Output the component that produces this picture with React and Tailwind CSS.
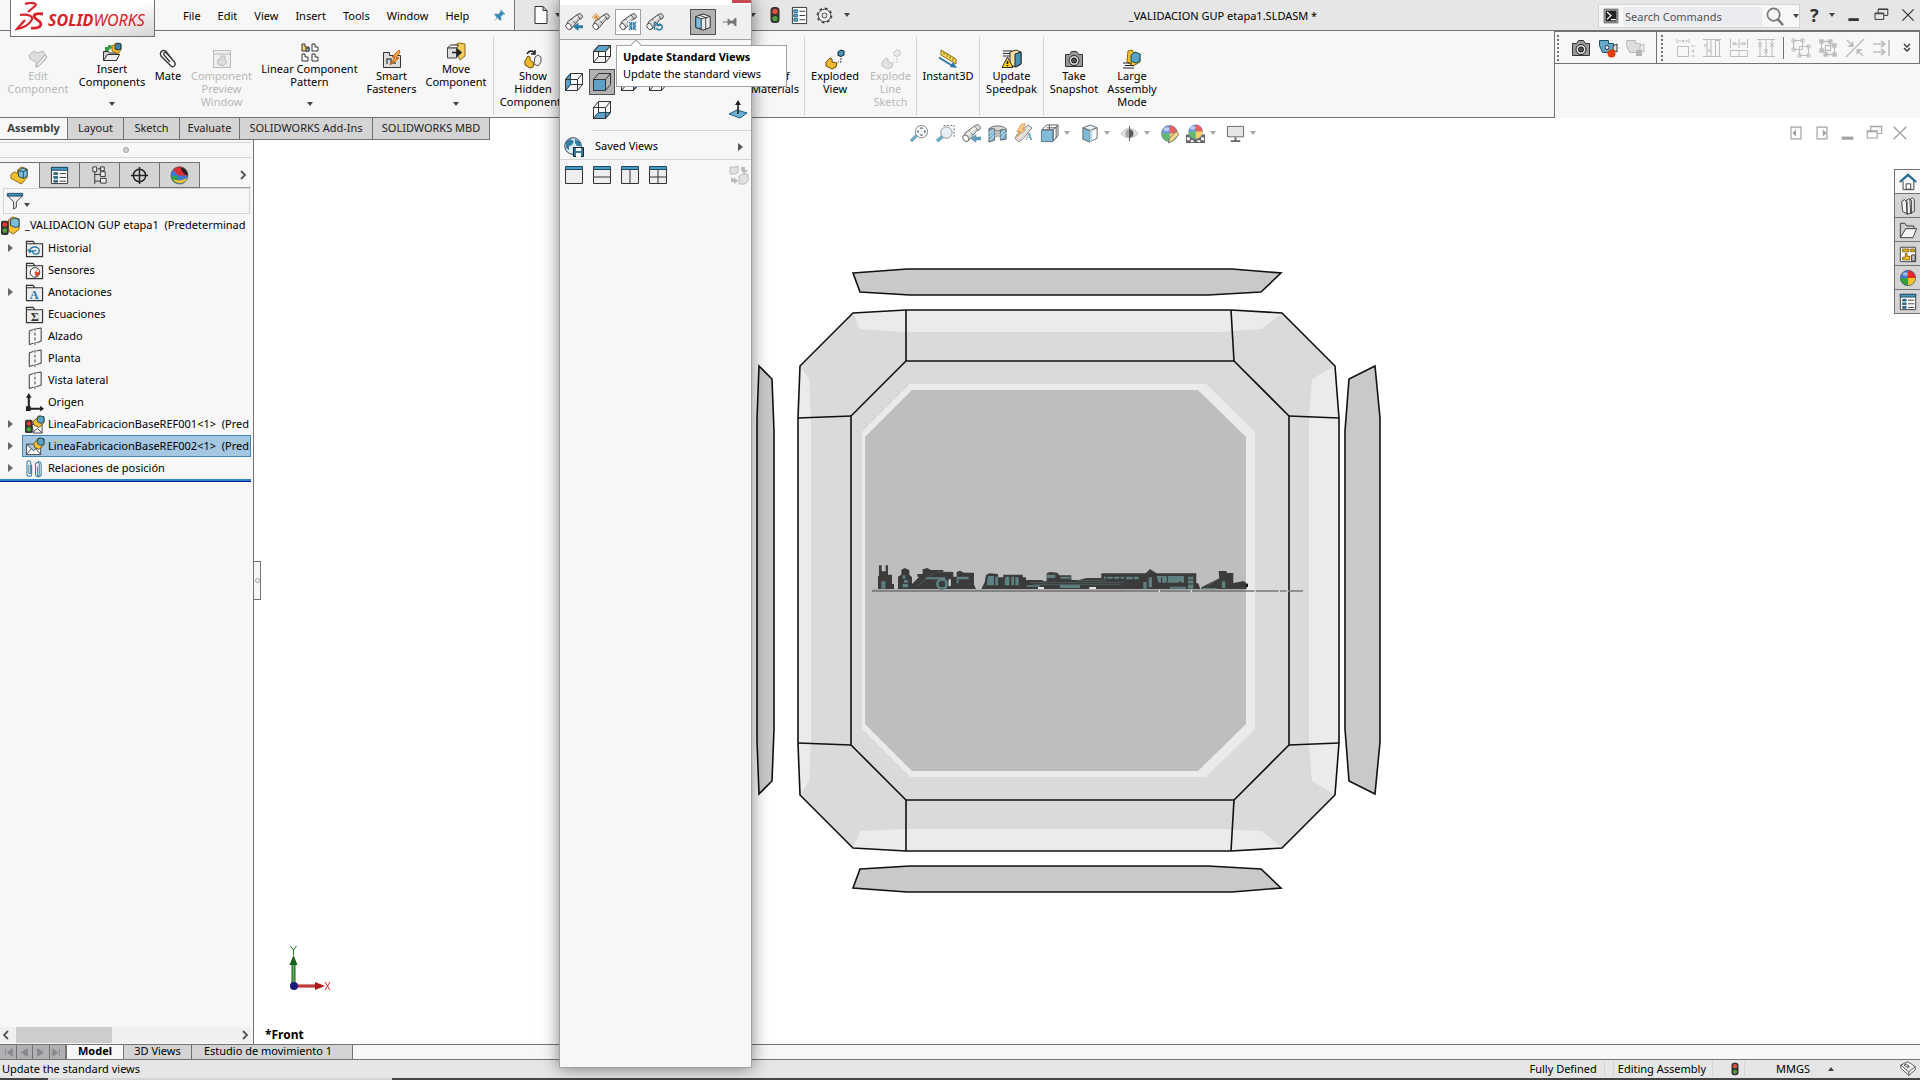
import { useState } from "react";

// All small drawings share a 20x20 box
const drawings = {
    newDoc: <path d="M4 1.5h8l4 4v13H4zM12 1.5v4h4" fill="#fff" stroke="#333" />,
    traffic: (
        <>
            <rect x="5" y="1" width="10" height="18" rx="4" fill="#333" />
            <circle cx="10" cy="6" r="3" fill="#e8513a" />
            <circle cx="10" cy="14" r="3" fill="#4da23a" />
        </>
    ),
    list: (
        <>
            <path d="M2.5 1.5h15v17h-15z" fill="#fff" stroke="#333" />
            <path d="M4 4h4v3H4zM4 8.5h4v3H4zM4 13h4v3H4z" fill="#5fa3c4" stroke="#1d5a7a" strokeWidth=".8" />
            <path d="M10 5.5h6M10 10h6M10 14.5h6" stroke="#333" />
        </>
    ),
    gear: (
        <>
            <circle cx="10" cy="10" r="6.5" fill="#f2f2f2" stroke="#444" />
            <circle cx="10" cy="10" r="7.5" fill="none" stroke="#444" strokeWidth="1.6" strokeDasharray="3 2.9" />
            <circle cx="10" cy="10" r="2.6" fill="#e6e6e6" stroke="#444" />
        </>
    ),
    pinBlue: <path d="M12 1l7 7-2 1-1-1-4 4 1 4-2 2-4-4-6 5 5-6-4-4 2-2 4 1 4-4-1-1z" fill="#3b8cb5" />,
    pinGray: <path d="M1 9.500h7v1H1zM7 6h1.500l1.500 2h4l2-3h2v10h-2l-2-3h-4l-1.500 2H7z" fill="#777" />,
    terminal: (
        <>
            <path d="M1.500 1.500h17v17h-17z" fill="#fff" stroke="#222" />
            <path d="M3 3h14v14H3z" fill="#222" />
            <path d="M5 5l5 4.500L5 14M10 14.500h6" fill="none" stroke="#fff" strokeWidth="1.500" />
        </>
    ),
    search: (
        <>
            <circle cx="8" cy="8" r="6.500" fill="none" stroke="#777" strokeWidth="1.800" />
            <path d="M12.500 13l5.500 6" stroke="#777" strokeWidth="2.600" />
        </>
    ),
    minimize: <path d="M3 14h13v3.500H3z" fill="#333" />,
    restore: <path d="M6.500 7.500v-5h12v8h-5M2.500 7.500h11v8h-11zM2.500 8.500h11M6.500 3h12" fill="none" stroke="#333" strokeWidth="1.200" />,
    close: <path d="M3 3l14 14M17 3L3 17" stroke="#333" strokeWidth="1.500" />,
    paneLeft: (
        <>
            <path d="M4.500 3.500h11v13h-11z" fill="none" stroke="#333" strokeWidth="1.300" />
            <path d="M10 6v8l-4-4z" fill="#333" />
        </>
    ),
    paneRight: (
        <>
            <path d="M4.500 3.500h11v13h-11z" fill="none" stroke="#333" strokeWidth="1.300" />
            <path d="M11 6v8l4-4z" fill="#333" />
        </>
    ),
    editPart: (
        <>
            <path d="M1 6l5-4 4 2 5-2 2 3v6l-6 6-3 1v-5l-6-3z" fill="#ddd" stroke="#bbb" />
            <path d="M17 6l2 2-8 9-3 1 1-3z" fill="#eee" stroke="#aaa" />
        </>
    ),
    insertPart: (
        <>
            <path d="M1.500 18.500v-9h5l1 1.500h7v7.500z" fill="#ccc" stroke="#333" />
            <path d="M1.500 18.500l4-6h12l-3 6z" fill="#eee" stroke="#333" />
            <path d="M3 9V5h3V3l4 .500-1 4-1-1-2 2.500z" fill="#2c9c3b" />
            <path d="M10 4l4-3 5 1v6l-3 4-6-3z" fill="#f0b92b" stroke="#7a5a10" strokeWidth=".8" />
            <path d="M13 3l3-2 3 1v5l-3 1-3-1z" fill="#3c83a8" stroke="#123" strokeWidth=".8" />
        </>
    ),
    clip: (
        <path d="M12 13L6 6c-1-2 1-3.500 2.500-2l8 9c2 3-1 6-3.500 4L3 7C1 3 5 0 8 2.500l6 7.500" fill="none" stroke="#333" strokeWidth="1.300" />
    ),
    previewWin: (
        <>
            <path d="M1.500 1.500h17v17h-17zM1.500 5h17" fill="#eee" stroke="#bbb" />
            <path d="M6 11l3-1V7h4v4l2 2-4 4-5-2z" fill="#ddd" stroke="#bbb" />
        </>
    ),
    pattern: (
        <>
            <path d="M2 2h3v3h4v4H2z" fill="#f6d873" stroke="#333" />
            <path d="M6 6h3v3H6z" fill="#9cd" stroke="#333" />
            <path d="M12 2h3v3h3v4h-6zM2 12h3v3h3v4H2zM12 12h3v3h3v4h-6z" fill="#fff" stroke="#333" />
        </>
    ),
    fasteners: (
        <>
            <path d="M1.500 3.500h6v3h11v12h-17z" fill="#ddd" stroke="#333" />
            <path d="M5 15v-5h4v4h5" fill="none" stroke="#555" strokeWidth="1.500" />
            <path d="M17 1l-7 7h3l-5 8 9-7h-3l4-6z" fill="#f3b13a" stroke="#c4531b" />
        </>
    ),
    movePart: (
        <>
            <path d="M7 4l6-3 6 1v12l-5 4z" fill="#f4cd57" stroke="#8a6a15" />
            <path d="M1.500 6l3-3h8l-2 3z" fill="#fff" stroke="#333" />
            <path d="M1.500 6h9v10h-9z" fill="#ddd" stroke="#444" />
            <path d="M6 10.500h7M11.500 7.500l3.500 3-3.500 3z" stroke="#222" strokeWidth="1.500" fill="#222" />
        </>
    ),
    showHidden: (
        <>
            <path d="M2 12l3-5 2 1v3l4 3-1 4-3 1-5-3z" fill="#f0b92b" stroke="#6b4c08" />
            <path d="M12 8l3-2 3 2v5l-3 4-4-2z" fill="#eee" stroke="#555" />
            <path d="M4 5c2-4 6-4 8 0M12 1v4H8" fill="none" stroke="#222" strokeWidth="1.500" />
        </>
    ),
    bom: <path d="M2.500 2.500h15v15h-15zM2.500 7h15M8 2.500v15" fill="#fff" stroke="#333" />,
    exploded: (
        <>
            <path d="M1 13l4-4 2 1v3l5 1-1 4-4 2-6-3z" fill="#f0b92b" stroke="#6b4c08" />
            <path d="M13 3l3-2 3 1v4l-3 1.500-3-1z" fill="#4a93b8" stroke="#123" />
            <path d="M16 9v4h-3" fill="none" stroke="#333" strokeDasharray="2 1" />
        </>
    ),
    explodeLine: (
        <>
            <path d="M1 13l4-4 2 1v3l5 1-1 4-4 2-6-3z" fill="#e2e2e2" stroke="#c4c4c4" />
            <path d="M13 3l3-2 3 1v4l-3 1.500-3-1z" fill="#eee" stroke="#c4c4c4" />
            <path d="M16 9v4h-3" fill="none" stroke="#c4c4c4" strokeDasharray="2 1" />
        </>
    ),
    instant: (
        <>
            <path d="M3 1l15 9v5L3 6z" fill="#f9dc62" stroke="#8a6d10" />
            <path d="M6 3v3M9 5v3M12 7v3M15 9v3" stroke="#8a6d10" />
            <path d="M1 8.500l13 8" stroke="#2d77a0" strokeWidth="2" />
            <path d="M12 18l7 1-4-6z" fill="#2d77a0" />
        </>
    ),
    speedpak: (
        <>
            <path d="M1 2h9M1 4.500h7M1 7h7" stroke="#333" />
            <path d="M8 3l6-2 5 2v12l-5 3-6-2z" fill="#f3e0a0" stroke="#333" />
            <path d="M13 5l6-2v12l-6 3z" fill="#4a93b8" stroke="#222" />
            <path d="M5.500 8l5.500 10.500H0z" fill="#ffcf1f" stroke="#333" />
            <path d="M5.500 12v3M5.500 16v1.300" stroke="#111" strokeWidth="1.600" />
        </>
    ),
    camera: (
        <>
            <path d="M1.500 5.500h4l2-3h5l2 3h4v12h-17z" fill="#999" stroke="#333" />
            <circle cx="10" cy="11.500" r="5" fill="#ddd" stroke="#222" />
            <circle cx="10" cy="11.500" r="2.500" fill="#555" stroke="#111" />
        </>
    ),
    largeAsm: (
        <>
            <path d="M6 2l4-1 2 3 6 1v8l-7 4-6-4z" fill="#f4c033" stroke="#8a6510" />
            <path d="M9 6l4-3 5 2v7l-4 2-5-2z" fill="#5ba2c6" stroke="#155" />
            <path d="M1 14h9M3 16.500h9M1 19h11" stroke="#222" />
        </>
    ),
    record: (
        <>
            <path d="M1.500 2.500h9v3h5v9h-11l-3-7z" fill="#67abc9" stroke="#1c4d66" />
            <path d="M15 8l4-2v8l-4-2z" fill="#ddd" stroke="#333" />
            <circle cx="9" cy="9.500" r="2" fill="#eee" stroke="#234" />
            <circle cx="13.500" cy="15.500" r="4" fill="#e63d0c" />
        </>
    ),
    recordOff: (
        <>
            <path d="M1.500 2.500h9v3h5v9h-11l-3-7z" fill="#ddd" stroke="#bbb" />
            <path d="M15 8l4-2v8l-4-2z" fill="#eee" stroke="#bbb" />
            <path d="M11 12h6v6h-6z" fill="#b5b5b5" />
        </>
    ),
    layA: <path d="M2.500 8.500h11v10h-11zM2 1v4M14 1v4M3 3h3M10 3h3M7 2l2 2M9 2L7 4M16 8h4M16 18h4M17 12l2 2M19 12l-2 2" fill="none" stroke="#bdbdbd" />,
    layB: <path d="M1 1.500h18M1 18.500h18M5 2v16M9 2v16M13.500 2.500h4v16h-4zM2 6l3 3M5 6L2 9M6 11l3 3M9 11l-3 3" fill="none" stroke="#bdbdbd" />,
    layC: <path d="M1.500 1v9M10 1v9M18.500 1v9M3 6h6M11 6h6M4 4l3 3M7 4L4 7M13 4l3 3M16 4l-3 3M1.500 12.500h17v6h-17zM10 12.500v6" fill="none" stroke="#bdbdbd" />,
    layD: <path d="M1 1.500h18M1 18.500h18M4 2v16M10 2v16M16 2v16M2 5l4 4M6 5L2 9M8 11l4 4M12 11l-4 4M14 5l4 4M18 5l-4 4" fill="none" stroke="#bdbdbd" />,
    groupA: <path d="M2.500 2.500h9v9h-9zM8.500 8.500h9v9h-9zM1 1h3v3H1zM10 1h3v3h-3zM1 10h3v3H1zM16 7h3v3h-3zM7 16h3v3H7zM16 16h3v3h-3z" fill="none" stroke="#bdbdbd" />,
    groupB: <path d="M3.500 3.500h9v9h-9zM7.500 7.500h9v9h-9zM2 2h3v3H2zM11 2h3v3h-3zM2 11h3v3H2zM15 6h3v3h-3zM6 15h3v3H6zM15 15h3v3h-3z" fill="none" stroke="#bdbdbd" strokeWidth="1.300" />,
    collapse: (
        <>
            <path d="M1 19L19 1M2 2l6 6M18 18l-6-6" stroke="#bdbdbd" strokeWidth="1.300" />
            <path d="M8.500 3v6h-6zM11.500 17v-6h6z" fill="#bdbdbd" />
        </>
    ),
    alignRight: <path d="M1 6h11M9 3l4 3-4 3M1 14h11M9 11l4 3-4 3M17 2v16" fill="none" stroke="#bdbdbd" strokeWidth="1.600" />,
    scope: (
        <>
            <path d="M14 1.500l3-1 2.500 3-1 2.500-3 1-7 9-3 2.500-4-4 1.500-5 4-3z" fill="#cfcfcf" stroke="#444" />
            <path d="M13 2l4 5M7 6.500l4.500 5" stroke="#444" />
            <path d="M14 4L6 11" stroke="#fff" strokeWidth="1.500" />
            <ellipse cx="4" cy="15" rx="2.800" ry="3.600" transform="rotate(-35 4 15)" fill="#fff" stroke="#444" />
        </>
    ),
    badgePrev: <path d="M20 13.500v3.500h-5v3l-6-4.800 6-4.700v3z" fill="#2b7ba6" />,
    badgeNew: <path d="M4.500 0v9M0 4.500h9M1.500 1.500l6 6M7.500 1.500l-6 6" stroke="#d9862a" />,
    badgeUpdate: (
        <>
            <path d="M10 9h10v11H10z" fill="#f7f7f7" />
            <path d="M11 10l3 3M14 10v3.500h-3M19 10l-3 3M16 10v3.500h3M11 19l3-3M11 15.500h3V19M19 19l-3-3M19 15.500h-3V19" fill="none" stroke="#2b7ba6" strokeWidth="1.300" />
        </>
    ),
    badgeReset: <path d="M9.500 10v9M13 13.500c3-2 6 0 5 3s-6 3-6 0M12.500 10.500v3.500H16" fill="none" stroke="#2b7ba6" strokeWidth="1.700" />,
    viewBox: (
        <>
            <path d="M2 4l8-3 8 3v12l-8 3-8-3z" fill="#ececec" stroke="#222" />
            <path d="M2 4l6 2.500V18l-6-2z" fill="#7cc0e2" stroke="#222" />
            <path d="M8 6.500L18 4M13 5.500V18M6 2.500l8 3" fill="none" stroke="#333" />
        </>
    ),
    normalTo: (
        <>
            <path d="M1 14l8-4 10 3-7 5z" fill="#6db1d3" stroke="#1d5a7a" />
            <path d="M10 14V3" stroke="#222" strokeWidth="1.600" />
            <path d="M10 0l3 5H7z" fill="#222" />
        </>
    ),
    savedViews: (
        <>
            <circle cx="9" cy="9" r="8.300" fill="#d8ecf5" stroke="#345" />
            <path d="M2 5l4-3 4 2-2 4-3 1v4l-3-2zM11 2l5 3 1 4h-4l-2-3z" fill="#2f7da5" />
            <path d="M9.500 10.500h10v9h-10z" fill="#2f7da5" stroke="#123" />
            <path d="M12 11h5v3h-5zM12 16h5v4h-5z" fill="#fff" />
        </>
    ),
    swap: (
        <>
            <path d="M1 2h6l2-1v6l-2 2H1zM10 11l4-2h5v7l-3 3h-6z" fill="#e2e2e2" stroke="#bbb" />
            <path d="M12 2h4v3h3l-4 4-3-4zM2 12v5h3v2l4-3-4-4v2z" fill="#bbb" />
        </>
    ),
    zoomFit: (
        <>
            <path d="M1 18l6-6" stroke="#3d8db5" strokeWidth="3.500" />
            <circle cx="12" cy="8" r="6.500" fill="#f4f9fc" stroke="#555" />
            <path d="M12 3l2 2h-4zM12 13l2-2h-4zM7 8l2-2v4zM17 8l-2-2v4z" fill="#333" />
        </>
    ),
    zoomArea: (
        <>
            <path d="M8 1.500h11v12" fill="none" stroke="#333" strokeDasharray="2 1.500" />
            <path d="M1 18l6-5" stroke="#3d8db5" strokeWidth="3.500" />
            <circle cx="11" cy="9" r="6" fill="#dcebf2" stroke="#666" />
        </>
    ),
    section: (
        <>
            <path d="M1 5c4-4 14-4 18 0v3h-6V7H7v3z" fill="#ccc" stroke="#333" />
            <path d="M7 7h6v7H7z" fill="#aaa" />
            <path d="M1 5h6v12l-6 2zM13 6h6v10l-6 1z" fill="#4a9ac2" stroke="#333" />
            <path d="M1 10l5-4M1 14l6-6M2 17l5-5M13 11l5-5M13 15l6-6" stroke="#d5ecf7" />
        </>
    ),
    dynamic: (
        <>
            <path d="M15 1l4 3-9 11-5 4-4-4 3-5z" fill="#d5d5d5" stroke="#555" />
            <path d="M8 0L3 8h4l-5 6 10-8H9l3-6z" fill="#f6bb56" stroke="#d57a1f" />
            <text x="12" y="17" fontSize="10" fontWeight="bold" fontFamily="Liberation Serif, serif" fill="#2b7ba6">A</text>
        </>
    ),
    orient: (
        <>
            <path d="M7 1h12v11l-5 6V6H2z" fill="#fff" stroke="#222" />
            <path d="M10 1v5M7 4h10M14 6l5-5M17 3v12" stroke="#222" />
            <path d="M1.500 6.500h12v12h-12z" fill="#5ba6cb" stroke="#1d4b63" />
        </>
    ),
    shaded: (
        <>
            <path d="M3 4l8-3 7 3-7 3z" fill="#d9edf7" stroke="#333" />
            <path d="M3 4l7 3v12l-7-3z" fill="#52a3cb" stroke="#333" />
            <path d="M10 7l8-3v11l-8 4z" fill="#fff" stroke="#333" />
            <path d="M10 7l3-1v12l-3 1z" fill="#9bcbe2" />
        </>
    ),
    eye: (
        <>
            <path d="M1 10c5-7 13-7 18 0-5 6-13 6-18 0z" fill="#ddd" stroke="#aaa" />
            <circle cx="10" cy="10" r="4.500" fill="#888" />
            <path d="M10 2v16" stroke="#222" />
            <path d="M10 6a4 4 0 010 8z" fill="#222" />
        </>
    ),
    ball: (
        <>
            <circle cx="10" cy="10" r="8.500" fill="#3f78d8" />
            <path d="M10 10V1.500A8.500 8.500 0 0118.500 10z" fill="#e02c2c" />
            <path d="M10 10h8.500a8.500 8.500 0 01-8.500 8.500z" fill="#f1c232" />
            <path d="M10 10v8.500A8.500 8.500 0 011.500 10z" fill="#2ea33c" />
            <circle cx="10" cy="10" r="8.500" fill="none" stroke="#555" strokeWidth=".7" />
            <ellipse cx="7" cy="5.500" rx="3" ry="2" fill="#fff" opacity=".5" />
        </>
    ),
    badgePencil: <path d="M17 8l3 3-7 7-4 2 1-5z" fill="#f5cf5a" stroke="#444" />,
    ballFloor: (
        <>
            <path d="M0 11h20v9H0z" fill="#333" />
            <path d="M1 14h3v3H1zM5 17h3v2H5zM12 17h3v2h-3zM16 14h3v3h-3z" fill="#fff" />
            <circle cx="10" cy="8" r="7.500" fill="#3f78d8" />
            <path d="M10 8V.500A7.500 7.500 0 0117.500 8z" fill="#e02c2c" />
            <path d="M10 8h7.500a7.500 7.500 0 01-7.500 7.500z" fill="#f1c232" />
            <path d="M10 8v7.500A7.500 7.500 0 012.500 8z" fill="#2ea33c" />
            <ellipse cx="7" cy="4" rx="3" ry="2" fill="#fff" opacity=".5" />
        </>
    ),
    ballDark: (
        <>
            <circle cx="10" cy="10" r="9" fill="#3f78d8" />
            <path d="M3 4a9 9 0 0114 0l2 6H8z" fill="#e02c2c" />
            <path d="M1 9l7 1-1 8.500A9 9 0 011 9z" fill="#2ea33c" />
            <path d="M3 14c4 2 11 1 16-2a9 9 0 01-16 2z" fill="#f1c232" />
            <path d="M3 4l6 6-8 1a9 9 0 012-7z" fill="#3f78d8" />
            <path d="M11 1a9 9 0 018 9c-4-1-7-4-8-9z" fill="#222" />
            <circle cx="10" cy="10" r="9" fill="none" stroke="#555" strokeWidth=".7" />
        </>
    ),
    monitor: (
        <>
            <path d="M1.500 2.500h17v11h-17z" fill="#ddd" stroke="#333" />
            <path d="M9 14h2v3h4v2H5v-2h4z" fill="#333" />
        </>
    ),
    home: (
        <>
            <path d="M4.500 9v9.500h12V9" fill="#f7f7f7" stroke="#333" />
            <path d="M8 12h5v6H8z" fill="#fff" stroke="#333" />
            <path d="M1 10l9-8 9 8" fill="none" stroke="#256b92" strokeWidth="2.600" />
        </>
    ),
    books: <path d="M3 5l3-2 3 2v14l-5-3zM8 4l3-2 3 2v14l-5 1zM12 3l3-2 2 2v13l-4 2z" fill="#f3f3f3" stroke="#333" />,
    folder: (
        <>
            <path d="M1.500 18.500v-16h5l2 3h8v3" fill="#ccc" stroke="#333" />
            <path d="M1.500 18.500l6-10h12l-4 10z" fill="#f4f4f4" stroke="#333" />
        </>
    ),
    viewPalette: (
        <>
            <path d="M1.500 2.500h17v16h-17z" fill="#fff" stroke="#333" />
            <path d="M4 4.500h7v3H4zM13 4.500h4v3h-4zM7 9.500h2v3h3v4H4v-3h3z" fill="#f3bf22" stroke="#6b4c08" strokeWidth=".9" />
            <path d="M14 11h4v7h-4z" fill="#bbb" stroke="#333" />
        </>
    ),
    props: (
        <>
            <path d="M1.500 1.500h17v17h-17z" fill="#fff" stroke="#333" />
            <path d="M1.500 1.500h17v3h-17z" fill="#4a9ac2" stroke="#1d4b63" />
            <path d="M4 7h4v2H4zM4 11h4v2H4zM4 15h4v2H4z" fill="#2b7ba6" stroke="#1d4b63" strokeWidth=".8" />
            <path d="M10 8h7M10 12h7M10 16h7" stroke="#333" />
        </>
    ),
    part: (
        <>
            <path d="M1 9l4-3 3 2V4l4-3 6 2v9l-6 7L1 13z" fill="#f4c033" stroke="#8a6510" />
            <path d="M9 5l4-3 5 2v7l-4 2-5-2z" fill="#7dbddb" stroke="#1d4b63" />
            <path d="M9 5l5 1v7M14 6l4-2" fill="none" stroke="#1d4b63" />
        </>
    ),
    configs: <path d="M3 1h4v5H3zM5 6v13M5 9h6M5 16h6M8 3h4M11 6h5v5h-5zM11 13h6v5h-6zM11 1h4v4h-4z" fill="#eee" stroke="#333" />,
    target: (
        <>
            <circle cx="10" cy="10" r="6.500" fill="none" stroke="#222" strokeWidth="1.600" />
            <path d="M10 1v18M1 10h18" stroke="#222" strokeWidth="1.600" />
        </>
    ),
    filter: (
        <>
            <path d="M1.500 4l7 7v8l3-2v-6l7-7z" fill="#eee" stroke="#333" />
            <path d="M1.500 1.500h17v3h-17z" fill="#3d8db5" stroke="#1d4b63" />
        </>
    ),
    rootPart: (
        <>
            <path d="M8 4l4-3 7 2v11l-6 5-5-3z" fill="#f4c033" stroke="#8a6510" />
            <path d="M10 4l4-2 5 2v7l-4 1-5-2z" fill="#7dbddb" stroke="#1d4b63" />
            <rect x="0" y="5" width="8" height="15" rx="2" fill="#333" />
            <circle cx="4" cy="9" r="2.500" fill="#e23a2c" />
            <circle cx="4" cy="15.500" r="2.500" fill="#4da23a" />
        </>
    ),
    folderBase: <path d="M1.500 18.500v-16h7l2 2.500h8v13.500zM1.500 5h9" fill="#ececec" stroke="#333" strokeWidth="1.200" />,
    history: <path d="M5 13c0-6 10-6 10-1s-7 5-7 1l4-1M3 11l2 3 3-2" fill="none" stroke="#2b7ba6" strokeWidth="1.500" />,
    sensor: (
        <>
            <circle cx="10.500" cy="12" r="5" fill="#fff" stroke="#333" />
            <path d="M10.500 12l3-3M10.500 12h4a4 4 0 01-3 4z" fill="#e0442c" stroke="#e0442c" />
        </>
    ),
    annotation: <text x="5" y="17" fontSize="13" fontWeight="bold" fontFamily="Liberation Serif, serif" fill="#2b7ba6">A</text>,
    equation: <text x="6" y="17" fontSize="13" fontWeight="bold" fontFamily="Liberation Serif, serif" fill="#333">Σ</text>,
    plane: (
        <>
            <path d="M4.500 4v14.500M4.500 18.500L9 17M4.500 4L9 2.500M12 2l5-1v14l-5 1.500" fill="none" stroke="#333" />
            <path d="M10.500 1v18" stroke="#333" strokeDasharray="3 2" />
        </>
    ),
    origin: (
        <>
            <path d="M4 3v13.500h13" fill="none" stroke="#222" strokeWidth="2.200" />
            <path d="M4 0l3 5H1zM20 16.500l-4-3v6zM1 14h5v5H1z" fill="#222" />
        </>
    ),
    compA: (
        <>
            <path d="M7 10h11v9H9z" fill="#f3f3f3" stroke="#444" />
            <path d="M8 19l5-5 5 5" fill="none" stroke="#444" />
            <path d="M8 7l4-3 2-3 6 1v6l-5 5-5-2z" fill="#f4c033" stroke="#6b4c08" />
            <path d="M13 3l3-2 4 1v5l-3 2-4-2z" fill="#5ba2c6" stroke="#1d4b63" />
            <rect x="0" y="5" width="8" height="14" rx="2" fill="#333" />
            <circle cx="4" cy="9" r="2.400" fill="#e23a2c" />
            <circle cx="4" cy="15" r="2.400" fill="#4da23a" />
        </>
    ),
    compB: (
        <>
            <path d="M1.500 7.500h15v11h-15zM1.500 7.500l7.500 7 7.500-7M1.500 18.500l5-6M16.500 18.500l-5-6" fill="#fff" stroke="#444" />
            <path d="M9 7l3-3 2-3 6 1v6l-5 5-5-2z" fill="#f4c033" stroke="#6b4c08" />
            <path d="M13 3l3-2 4 1v5l-3 2-4-2z" fill="#5ba2c6" stroke="#1d4b63" />
        </>
    ),
    mates: (
        <path d="M4 6v8c0 2 2 2 2 0V4c0-3-4-3-4 0v12c0 3 5 3 5 0V6M13 8v8c0 2 2 2 2 0V6c0-3-4-3-4 0v10c0 4 6 3 6 0V5c0-2-3-3-4-1" fill="none" stroke="#3d7f9f" strokeWidth="1.100" />
    ),
    note: <path d="M1 5l9-4 9 6v4l-8 7-10-9zM1 5l10 9 8-7M11 14v4M5 5l3-1 3 2-3 1zM9 8l3-1" fill="#fff" stroke="#333" />,
    winOne: <path d="M1.500 4.500h17v14h-17z" fill="#eee" stroke="#333" />,
    winRows: <path d="M1.500 4.500h17v14h-17zM1.500 12h17" fill="#eee" stroke="#333" />,
    winCols: <path d="M1.500 4.500h17v14h-17zM10 4.500v14" fill="#eee" stroke="#333" />,
    winFour: <path d="M1.500 4.500h17v14h-17zM10 4.500v14M1.500 12h17" fill="#eee" stroke="#333" />,
    winHead: <path d="M1.500 1.500h17v3h-17z" fill="#4a9ac2" stroke="#1d4b63" />,
};

const faces = {
    top: "M1.500 7.500l5-6h12l-5 6z",
    left: "M1.500 7.500l5-6v11l-5 6z",
    front: "M1.500 7.500h12v11h-12z",
    right: "M13.500 7.500l5-6v11l-5 6z",
    bottom: "M1.500 18.500l5-6h12l-5 6z",
    back: "",
};

function Icon({ names, size = 20 }) {
    return (
        <svg viewBox="0 0 20 20" width={size} height={size} className="shrink-0 overflow-visible" aria-hidden="true">
            {names.split(" ").map((n) => (
                <g key={n}>{drawings[n]}</g>
            ))}
        </svg>
    );
}

function Cube({ face }) {
    return (
        <svg viewBox="0 0 20 20" width="20" height="20" className="shrink-0" aria-hidden="true">
            {face !== "front" && <path d="M6.500 1.500v11h12M6.500 12.500l-5 6" fill="none" stroke="#333" />}
            <path d={faces[face]} fill="#5ba2c6" stroke="#1d4b63" />
            <path d="M1.500 7.500h12v11h-12zM1.500 7.500l5-6h12v11l-5 6M13.500 7.500l5-6" fill="none" stroke="#333" />
        </svg>
    );
}

function Caret({ className = "" }) {
    return (
        <svg viewBox="0 0 6 4" width="6" height="4" className={`shrink-0 ${className}`} aria-hidden="true">
            <path d="M0 0h6L3 4z" fill="#444" />
        </svg>
    );
}

function Logo() {
    return (
        <div className="relative z-10 ml-[10px] flex h-[37px] w-[145px] items-center border border-t-0 border-neutral-500 bg-linear-to-br from-white via-white to-neutral-300 pl-1">
            <svg viewBox="0 0 30 32" width="30" height="32" className="shrink-0" aria-hidden="true">
                <g fill="none" stroke="#d8232a" strokeWidth="2.200">
                    <path d="M10 2c6-2 13-1 10 2l-7 6" />
                    <path d="M5 13c8-1 15 1 11 6-3 5-9 7-14 8l8-9" />
                    <path d="M28 12c-6-1-11 0-8 4l5 4c3 4-2 7-9 6" strokeWidth="2.800" />
                </g>
            </svg>
            <span className="pt-1 pl-[3px] text-[16px] text-[#d8232a] italic">
                <b>SOLID</b>WORKS
            </span>
        </div>
    );
}

const menus = ["File", "Edit", "View", "Insert", "Tools", "Window", "Help"];

function TitleBar() {
    return (
        <header className="flex h-[31px] border-b border-neutral-500 bg-[#e6e6e6]">
            <div className="flex w-[515px] shrink-0 border-r border-neutral-500 bg-[#f7f7f7]">
                <Logo />
                <nav className="ml-7 flex items-center gap-[17px] pt-[2px]">
                    {menus.map((m) => (
                        <button key={m}>{m}</button>
                    ))}
                </nav>
                <button className="mr-2 ml-auto" aria-label="Pin menu">
                    <Icon names="pinBlue" size={13} />
                </button>
            </div>
            <div className="flex w-[337px] shrink-0 items-center pl-4">
                <button aria-label="New"><Icon names="newDoc" /></button>
                <Caret className="mr-auto ml-1" />
                <Caret className="mr-[10px]" />
                <button aria-label="Rebuild" className="mr-[6px]"><Icon names="traffic" size={18} /></button>
                <button aria-label="File properties" className="mr-[6px]"><Icon names="list" size={19} /></button>
                <button aria-label="Options" className="mr-[10px]"><Icon names="gear" size={19} /></button>
                <Caret className="mr-[2px]" />
            </div>
            <h1 className="flex-1 self-center pt-[2px] pr-1 text-center">_VALIDACION GUP etapa1.SLDASM *</h1>
            <div className="mt-1 flex h-[24px] w-[202px] items-center border border-neutral-300 bg-[#f7f7f7] pl-1">
                <Icon names="terminal" size={16} />
                <input
                    className="ml-1 h-[19px] w-[139px] bg-[#ebecf0] pl-[2px] text-neutral-600 outline-none placeholder:text-neutral-600"
                    placeholder="Search Commands"
                    aria-label="Search Commands"
                />
                <span className="ml-1 flex"><Icon names="search" size={19} /></span>
                <Caret className="ml-2" />
            </div>
            <div className="flex w-[120px] items-center justify-between pr-1 pl-[10px]">
                <button className="text-[18px] font-bold text-[#333]">?</button>
                <Caret />
                <button aria-label="Minimize"><Icon names="minimize" size={16} /></button>
                <button aria-label="Restore"><Icon names="restore" size={16} /></button>
                <button aria-label="Close"><Icon names="close" size={16} /></button>
            </div>
        </header>
    );
}

const ribbon = [
    { icon: "editPart", lines: ["Edit", "Component"], w: "w-[76px]", off: true },
    { icon: "insertPart", lines: ["Insert", "Components"], w: "w-[72px]", drop: true },
    { icon: "clip", lines: ["Mate"], w: "w-[40px]" },
    { icon: "previewWin", lines: ["Component", "Preview", "Window"], w: "w-[67px]", off: true },
    { icon: "pattern", lines: ["Linear Component", "Pattern"], w: "w-[109px]", drop: true },
    { icon: "fasteners", lines: ["Smart", "Fasteners"], w: "w-[55px]" },
    { icon: "movePart", lines: ["Move", "Component"], w: "w-[74px]", drop: true },
    { sep: true },
    { icon: "showHidden", lines: ["Show", "Hidden", "Components"], w: "w-[78px]" },
    { gap: true },
    { icon: "bom", lines: ["Bill of", "Materials"], w: "w-[58px]" },
    { sep: true },
    { icon: "exploded", lines: ["Exploded", "View"], w: "w-[60px]" },
    { icon: "explodeLine", lines: ["Explode", "Line", "Sketch"], w: "w-[51px]", off: true },
    { sep: true },
    { icon: "instant", lines: ["Instant3D"], w: "w-[62px]" },
    { sep: true },
    { icon: "speedpak", lines: ["Update", "Speedpak"], w: "w-[63px]" },
    { sep: true },
    { icon: "camera", lines: ["Take", "Snapshot"], w: "w-[60px]" },
    { icon: "largeAsm", lines: ["Large", "Assembly", "Mode"], w: "w-[56px]" },
];

function RibbonButton({ item }) {
    return (
        <button
            disabled={item.off}
            className={`flex shrink-0 flex-col items-center leading-[13px] whitespace-nowrap ${item.w} ${item.drop ? "pt-[11px]" : "pt-[18px]"} ${item.off ? "text-[#b8b8b8]" : ""}`}
        >
            <Icon names={item.icon} />
            {item.lines.map((l) => (
                <span key={l}>{l}</span>
            ))}
            {item.drop && <Caret className="mt-[14px]" />}
        </button>
    );
}

function Ribbon() {
    const off = ["layA", "layB", "layC", "layD"];
    const off2 = ["groupA", "groupB", "collapse", "alignRight"];
    return (
        <div className="flex h-[87px] bg-[#f7f7f7]">
            <div className="flex flex-1 items-start border-r border-b border-neutral-500">
                {ribbon.map((item, idx) => {
                    if (item.sep) return <div key={idx} className="mt-[6px] h-[78px] w-px shrink-0 bg-neutral-300" />;
                    if (item.gap) return <div key={idx} className="w-[174px] shrink-0" />;
                    return <RibbonButton key={idx} item={item} />;
                })}
            </div>
            <div className="flex h-[33px] w-[365px] shrink-0 items-center border border-l-0 border-neutral-500">
                <div className="ml-[2px] h-[26px] border-l-2 border-dotted border-neutral-500" />
                <div className="flex items-center gap-[7px] pl-3">
                    <button aria-label="Take snapshot"><Icon names="camera" /></button>
                    <button aria-label="Record video"><Icon names="record" /></button>
                    <button aria-label="Stop recording" disabled><Icon names="recordOff" /></button>
                </div>
                <div className="ml-[11px] h-full w-px bg-neutral-500" />
                <div className="mr-2 ml-1 h-[26px] border-l-2 border-dotted border-neutral-500" />
                <div className="flex items-center gap-[7px] pl-1">
                    {off.map((n) => (
                        <button key={n} aria-label={n} disabled><Icon names={n} /></button>
                    ))}
                    <div className="h-[22px] w-px bg-neutral-500" />
                    {off2.map((n) => (
                        <button key={n} aria-label={n} disabled><Icon names={n} /></button>
                    ))}
                </div>
                <button className="ml-auto pr-2" aria-label="More">
                    <svg viewBox="0 0 8 10" width="8" height="10">
                        <path d="M1 1l3 3 3-3M1 5l3 3 3-3" fill="none" stroke="#333" strokeWidth="1.300" />
                    </svg>
                </button>
            </div>
        </div>
    );
}

const commandTabs = [
    ["Assembly", "w-[68px]"],
    ["Layout", "w-[56px]"],
    ["Sketch", "w-[56px]"],
    ["Evaluate", "w-[60px]"],
    ["SOLIDWORKS Add-Ins", "w-[133px]"],
    ["SOLIDWORKS MBD", "w-[117px]"],
];

function CommandTabs() {
    const [active, setActive] = useState("Assembly");
    return (
        <div className="flex h-[22px] bg-white">
            {commandTabs.map(([name, w]) => (
                <button
                    key={name}
                    onClick={() => setActive(name)}
                    className={`shrink-0 border-r border-b border-neutral-500 whitespace-nowrap ${w} ${active === name ? "bg-[#f7f7f7] font-bold text-neutral-700" : "bg-[#d4d4d4] text-[#222]"}`}
                >
                    {name}
                </button>
            ))}
        </div>
    );
}

const tree = [
    { icon: "folderBase history", name: "Historial", open: true },
    { icon: "folderBase sensor", name: "Sensores" },
    { icon: "folderBase annotation", name: "Anotaciones", open: true },
    { icon: "folderBase equation", name: "Ecuaciones" },
    { icon: "plane", name: "Alzado" },
    { icon: "plane", name: "Planta" },
    { icon: "plane", name: "Vista lateral" },
    { icon: "origin", name: "Origen" },
    { icon: "compA", name: "LineaFabricacionBaseREF001<1>  (Pred", open: true },
    { icon: "compB", name: "LineaFabricacionBaseREF002<1>  (Pred", open: true, selected: true },
    { icon: "mates", name: "Relaciones de posición", open: true },
];

function FeatureTree() {
    const panels = ["part", "props", "configs", "target", "ballDark"];
    return (
        <aside className="flex w-[254px] shrink-0 flex-col border-r border-neutral-500 bg-[#f7f7f7] pr-[2px]">
            <div className="mt-[2px] flex h-4 items-center justify-center border-y border-neutral-300">
                <span className="size-[6px] rounded-full border border-neutral-400 bg-neutral-300" />
            </div>
            <div className="mt-1 flex h-[26px]">
                {panels.map((p, i) => (
                    <button
                        key={p}
                        aria-label={p}
                        className={`flex w-10 items-center justify-center border-t border-r border-neutral-500 ${i === 0 ? "" : "border-b bg-[#d4d4d4]"}`}
                    >
                        <Icon names={p} size={19} />
                    </button>
                ))}
                <button className="flex flex-1 items-center justify-end border-b border-neutral-400 pr-1" aria-label="More tabs">
                    <svg viewBox="0 0 8 10" width="8" height="10">
                        <path d="M2 1l4 4-4 4" fill="none" stroke="#555" strokeWidth="1.800" />
                    </svg>
                </button>
            </div>
            <button className="mr-[1px] ml-[3px] flex h-[26px] items-center border border-neutral-300 pl-[2px]" aria-label="Filter">
                <Icon names="filter" size={18} />
                <Caret className="mt-2" />
            </button>
            <div className="flex h-[23px] items-center gap-[5px] overflow-hidden pl-[1px] whitespace-pre">
                <Icon names="rootPart" size={19} />
                _VALIDACION GUP etapa1  (Predeterminad
            </div>
            <ul>
                {tree.map((t) => (
                    <li key={t.name} className="flex h-[22px] items-center">
                        <span className="w-[22px] shrink-0 pl-2">
                            {t.open && (
                                <svg viewBox="0 0 5 8" width="5" height="8">
                                    <path d="M0 0l5 4-5 4z" fill="#666" />
                                </svg>
                            )}
                        </span>
                        <button
                            className={`flex h-full min-w-0 flex-1 items-center gap-1 overflow-hidden border pl-[2px] whitespace-pre ${t.selected ? "border-[#3f87bd] bg-[#a6c7e2]" : "border-transparent"}`}
                        >
                            <Icon names={t.icon} size={19} />
                            {t.name}
                        </button>
                    </li>
                ))}
            </ul>
            <div className="h-[3px] border-t-2 border-b border-t-[#2a86c4] border-b-[#1414a0]" />
            <div className="mt-auto mb-[1px] flex h-4 items-center justify-between bg-[#f0f0f0] px-[2px]">
                <svg viewBox="0 0 8 10" width="8" height="10">
                    <path d="M6 1L2 5l4 4" fill="none" stroke="#555" strokeWidth="1.800" />
                </svg>
                <div className="mr-auto ml-[6px] h-full w-24 bg-[#cdcdcd]" />
                <svg viewBox="0 0 8 10" width="8" height="10">
                    <path d="M2 1l4 4-4 4" fill="none" stroke="#555" strokeWidth="1.800" />
                </svg>
            </div>
        </aside>
    );
}

// Side profile of the production line, drawn at three units per pixel
function ProductionLine() {
    return (
        <g transform="translate(860 540) scale(.3333)">
            <path d="M36 149h1122v7H36z" fill="#838383" />
            <path d="M1158 151h171v4H1158z" fill="#777" />
            <g fill="#3b3b3b">
                <path d="M54 147V108h3V76h8v18h12V76h7v28h12v28h6v15z" />
                <path d="M114 147v-37l10-6v-14l10-6 14 6v14l8 8v20l22-22h-6v-8h16V88l14-4 10 6h38v6h30v14h10V96l10-4 12 6h30v36l6 13z" />
                <path d="M364 147l10-20 4-22 10-5 26 2v10h16v-8h58v8h10v8h48l6 4h8v-24l10-4 22 2 6 8h36v14h22l24-6h44v-14h285v30h6l6 17z" />
                <path d="M832 125l38-38 22 14v46h-60zM1022 147l4-6 52-26-2-22h22l4 6h18v30l20-4 12-2 8 8v16z" />
                <path d="M1158 131h6v10h-6z" fill="#111" />
            </g>
            <g fill="#5f8080">
                <path d="M64 124h12v22H64zM128 106h8v10h-8zM132 120h12v8h-12zM128 132h16v10h-16zM196 112h60v6h-56zM290 110h36v8h-30v12h-6zM384 108h18v28h-22zM406 110h8v26h-8zM436 110h12v26h-14zM454 110h8v26h-8zM466 112h10v24h-10z" />
                <path d="M560 104h26v10h-26zM602 110h30v6h-30zM732 110h60v6h-60zM798 110h38v8h-38zM890 108h82v20h-76zM984 110h16v36h-16zM850 126h10v20h-10zM866 112h10v30h-10zM1086 124h10v20h-10zM1026 144h44v4h-44z" />
                <path d="M500 136h40v4h-40zM600 134h60v10h-60zM930 140h48v6h-48z" />
            </g>
            <circle cx="246" cy="132" r="14" fill="none" stroke="#5f8080" strokeWidth="8" />
            <path d="M510 128h300M520 134h280M650 122h90M232 96h40M170 140l50-40M1040 140l40-26" stroke="#586c6c" strokeWidth="2" />
            <path d="M740 108v12M760 108v12M780 108v12M820 108v12M905 112v22M922 108v20M984 120h16M984 132h16" stroke="#333" strokeWidth="3" />
            <path d="M780 136l20-14 30 12zM894 140l24-12 20 10zM944 136l16-12 14 12z" fill="#3b3b3b" />
            <path d="M534 141h18v6h-18zM688 141h20v6h-20zM266 118h6v20h-6zM896 150h4v6h-4zM992 150h4v6h-4zM1183 151h5v4h-5zM1256 151h4v5h-4zM1280 151h5v4h-5z" fill="#e4e4e4" />
        </g>
    );
}

function Model() {
    return (
        <svg viewBox="254 140 1666 904" className="absolute inset-0 size-full" role="img" aria-label="Front view of the assembly">
            <g fill="#c9c9c9" stroke="#111" strokeWidth="1.600">
                <path d="M853 273l54-4h325l49 4-20 19-53 3H910l-50-3z" />
                <path d="M860 869l50-3h298l53 3 20 19-49 4H907l-54-4z" />
                <path d="M759 366l13 13 2 52v298l-2 52-13 13-2-52V418z" />
                <path d="M1375 366l-26 13-4 52v298l4 52 26 13 5-52V418z" />
            </g>
            <path
                d="M853 313l53-3h325l51 3 53 53 4 52v325l-4 52-53 53-51 3H906l-53-3-53-53-2-52V418l2-52z"
                fill="#ebebeb"
            />
            <path
                d="M853 313l7 16 42 3h318l42-3 20-16 53 53-23 13-3 39v325l3 38 23 14-53 53-20-17-42-2H902l-42 2-7 17-53-53 9-14 2-38V418l-2-39-9-13z"
                fill="#dadada"
            />
            <path d="M910 384h296l49 48v297l-49 48H910l-48-48V432z" fill="#ebebeb" />
            <path d="M912 390h286l48 47v287l-48 47H912l-47-47V437z" fill="#bebebe" />
            <g fill="none" stroke="#111" strokeWidth="1.600">
                <path d="M853 313l53-3h325l51 3 53 53 4 52v325l-4 52-53 53-51 3H906l-53-3-53-53-2-52V418l2-52z" />
                <path d="M906 361h328l55 55v329l-55 55H906l-55-55V416z" />
                <path d="M906 310v51M1231 310l3 51M1339 418l-50-2M1339 743l-50 2M1231 851l3-51M906 851v-51M798 743l53 2M798 418l53-2" />
            </g>
            <ProductionLine />
            <rect x="292" y="963" width="3" height="20" fill="#63a863" stroke="#176117" />
            <path d="M293.500 955l4 10h-8z" fill="#176117" />
            <rect x="297" y="985" width="20" height="2" fill="#e06060" stroke="#a01515" />
            <path d="M325 986l-10 4v-8z" fill="#b01818" />
            <circle cx="294" cy="986" r="4" fill="#1a1a80" />
            <path d="M290.500 946l3 4 3-4M293.500 950v5" fill="none" stroke="#128012" />
            <path d="M325 982l5 8M330 982l-5 8" fill="none" stroke="#e82020" />
        </svg>
    );
}

const hud = ["zoomFit", "zoomArea", "scope badgePrev", "section", "dynamic", "orient", "", "shaded", "", "eye", "", "ball badgePencil", "ballFloor", "", "monitor", ""];

function Viewport() {
    return (
        <main className="relative min-w-0 flex-1 bg-white">
            <Model />
            <div className="absolute inset-x-0 -top-[18px] flex h-[22px] items-center justify-center pr-[6px] opacity-75">
                {hud.map((n, i) =>
                    n ? (
                        <button key={i} className="flex w-[26px] justify-center" aria-label={n}>
                            <Icon names={n} size={19} />
                        </button>
                    ) : (
                        <span key={i} className="flex w-[14px] opacity-60">
                            <Caret className="ml-[2px]" />
                        </span>
                    )
                )}
            </div>
            <div className="absolute -top-[16px] right-[11px] flex gap-2 opacity-45">
                {["paneLeft", "paneRight", "minimize", "restore", "close"].map((n) => (
                    <button key={n} aria-label={n}><Icon names={n} size={18} /></button>
                ))}
            </div>
            <div className="absolute top-[29px] right-0 flex w-[26px] flex-col border-t border-l border-neutral-500">
                {["home", "books", "folder", "viewPalette", "ball", "props"].map((n, i) => (
                    <button
                        key={n}
                        aria-label={n}
                        className={`flex h-6 items-center justify-center border-b border-neutral-500 ${i === 0 ? "bg-[#f7f7f7]" : "bg-[#d4d4d4]"}`}
                    >
                        <Icon names={n} size={18} />
                    </button>
                ))}
            </div>
            <button
                className="absolute top-[421px] left-0 flex h-[39px] w-[7px] items-center justify-center border border-l-0 border-neutral-500 bg-[#f7f7f7]"
                aria-label="Collapse panel"
            >
                <span className="size-[5px] shrink-0 rounded-full border border-neutral-400" />
            </button>
            <b className="absolute bottom-0 left-[11px] text-[12px]">*Front</b>
        </main>
    );
}

function OrientationPanel() {
    const cell = "flex size-[26px] items-center justify-center";
    return (
        <section className="absolute top-0 bottom-[12px] left-[559px] z-20 w-[193px] border border-t-0 border-neutral-400 bg-[#f7f7f7] shadow-[0_0_16px_rgba(0,0,0,0.5)]">
            <div className="flex h-[5px] justify-end bg-white">
                <span className="h-[3px] w-[19px] bg-[#c84a50]" />
            </div>
            <div className="flex h-[35px] items-center gap-[1px] border-b border-neutral-400 bg-[#f0f0f0] pr-2 pl-[1px]">
                <button className={cell} aria-label="Previous view"><Icon names="scope badgePrev" size={18} /></button>
                <button className={cell} aria-label="New view"><Icon names="scope badgeNew" size={18} /></button>
                <button className={`${cell} border border-neutral-400 bg-white`} aria-label="Update standard views">
                    <Icon names="scope badgeUpdate" size={18} />
                </button>
                <button className={cell} aria-label="Reset standard views"><Icon names="scope badgeReset" size={18} /></button>
                <button className={`${cell} ml-auto border border-neutral-600 bg-[#b2b2b2]`} aria-label="View selector">
                    <Icon names="viewBox" size={18} />
                </button>
                <button className={cell} aria-label="Pin"><Icon names="pinGray" size={16} /></button>
            </div>
            <div className="grid h-[84px] grid-cols-[28px_28px_28px_28px_1fr] grid-rows-3 items-center pl-[1px]">
                <button className={`${cell} col-start-2`} aria-label="Top"><Cube face="top" /></button>
                <button className={`${cell} col-start-1 row-start-2`} aria-label="Left"><Cube face="left" /></button>
                <button className={`${cell} row-start-2 border border-neutral-600 bg-[#b2b2b2]`} aria-label="Front"><Cube face="front" /></button>
                <button className={`${cell} row-start-2`} aria-label="Right"><Cube face="right" /></button>
                <button className={`${cell} row-start-2`} aria-label="Back"><Cube face="back" /></button>
                <button className={`${cell} col-start-2 row-start-3`} aria-label="Bottom"><Cube face="bottom" /></button>
                <button className={`${cell} col-start-5 row-start-3 justify-self-end`} aria-label="Normal to"><Icon names="normalTo" /></button>
            </div>
            <div className="mt-[6px] ml-8 border-t border-neutral-300" />
            <button className="flex h-[29px] w-full items-center border-b border-neutral-300 pt-[3px] pr-2 pl-1">
                <Icon names="savedViews" />
                <span className="ml-[11px]">Saved Views</span>
                <svg viewBox="0 0 5 8" width="5" height="8" className="ml-auto">
                    <path d="M0 0l5 4-5 4z" fill="#555" />
                </svg>
            </button>
            <div className="flex h-[30px] items-center gap-2 pr-[2px] pl-1">
                <button aria-label="Single view"><Icon names="winOne winHead" /></button>
                <button aria-label="Two view horizontal"><Icon names="winRows winHead" /></button>
                <button aria-label="Two view vertical"><Icon names="winCols winHead" /></button>
                <button aria-label="Four view"><Icon names="winFour winHead" /></button>
                <button aria-label="Link views" className="ml-auto" disabled><Icon names="swap" /></button>
            </div>
            <div role="tooltip" className="absolute top-[45px] left-14 w-[171px] border border-neutral-400 bg-white px-[6px] pt-[2px] pb-1 leading-[17px] whitespace-nowrap">
                <span className="absolute -top-[5px] left-[15px] size-2 rotate-45 border-t border-l border-neutral-400 bg-white" />
                <b className="block">Update Standard Views</b>
                Update the standard views
            </div>
        </section>
    );
}

function BottomTabs() {
    const nav = ["M6 3v8M13 3v8L8 7z", "M11 3v8L5 7z", "M5 3v8l6-4z", "M3 3v8l5-4zM10 3v8"];
    return (
        <div className="flex h-4 border-y border-neutral-500 bg-[#f7f7f7] leading-[12px]">
            <div className="flex w-[67px] shrink-0 border-r border-neutral-500 bg-[#b0b0b4]">
                {nav.map((d) => (
                    <button key={d} className="w-[17px] border-r border-neutral-500" aria-label="Scroll tabs">
                        <svg viewBox="0 0 16 14" width="15" height="13">
                            <path d={d} fill="#888" stroke="#888" />
                        </svg>
                    </button>
                ))}
            </div>
            <button className="w-[57px] border-r border-neutral-500 pb-[2px] font-bold">Model</button>
            <button className="w-[68px] border-r border-neutral-500 bg-[#d4d4d4] pb-[2px]">3D Views</button>
            <button className="w-[161px] border-r border-neutral-500 bg-[#d4d4d4] pr-2 pb-[2px]">Estudio de movimiento 1</button>
        </div>
    );
}

function StatusBar() {
    return (
        <footer>
            <div className="flex h-[18px] items-center bg-[#e6e6e6] pr-1 pl-[2px]">
                <span className="mr-auto">Update the standard views</span>
                <span className="border-r border-neutral-300 pr-[7px]">Fully Defined</span>
                <span className="ml-2 border-x border-neutral-300 px-1 pr-[6px]">Editing Assembly</span>
                <span className="flex w-8 justify-center border-r border-neutral-300 pl-3"><Icon names="traffic" size={14} /></span>
                <select className="ml-[9px] w-[62px] appearance-none pl-[22px] outline-none" aria-label="Units">
                    <option>MMGS</option>
                </select>
                <Caret className="mr-[66px] ml-3 rotate-180" />
                <Icon names="note" size={16} />
            </div>
            <div className="flex h-[2px] bg-[#444]">
                <div className="ml-12 w-[344px] bg-neutral-300" />
            </div>
        </footer>
    );
}

function App() {
    return (
        <div className="relative flex h-screen flex-col overflow-hidden bg-white font-['Noto_Sans','Open_Sans',sans-serif] text-[11px] text-black">
            <TitleBar />
            <Ribbon />
            <CommandTabs />
            <div className="flex min-h-0 flex-1">
                <FeatureTree />
                <Viewport />
            </div>
            <BottomTabs />
            <StatusBar />
            <OrientationPanel />
        </div>
    );
}

export default App;
